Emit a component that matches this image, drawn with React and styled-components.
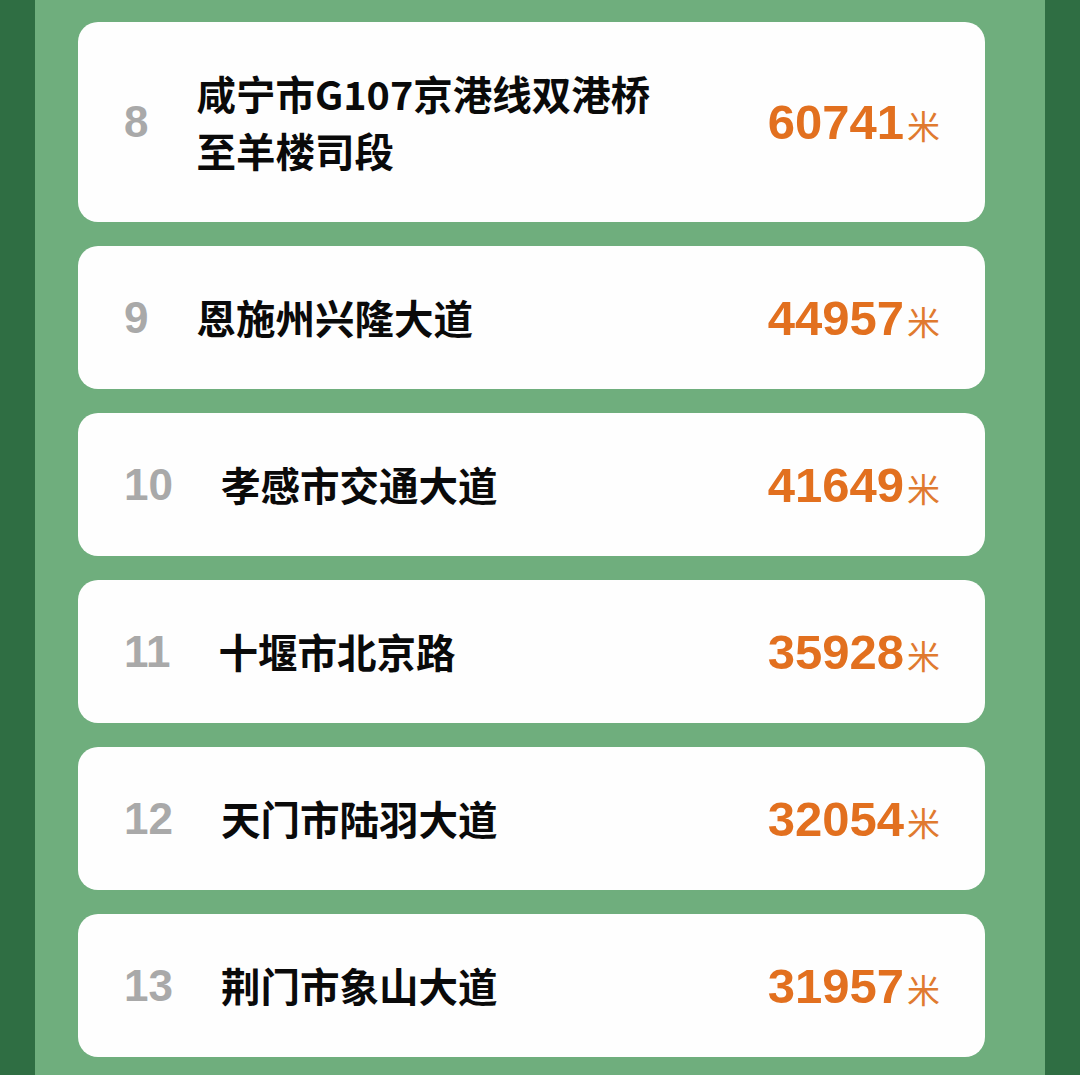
import React from "react";
import styled, { createGlobalStyle } from "styled-components";

const GlobalStyle = createGlobalStyle`
  html, body {
    margin: 0;
    padding: 0;
    background-color: #2f6e43;
  }
`;

const Page = styled.div`
  width: 1080px;
  height: 1075px;
  overflow: hidden;
  background-color: #2f6e43;
  padding: 0 35px;
  box-sizing: border-box;
`;

const Panel = styled.div`
  height: 100%;
  background-color: #6fae7d;
  padding: 22px 60px 0 43px;
  box-sizing: border-box;
  display: flex;
  flex-direction: column;
  gap: 24px;
`;

const Card = styled.div`
  background-color: #fefefe;
  border-radius: 20px;
  min-height: ${(p) => (p.tall ? "200px" : "143px")};
  box-sizing: border-box;
  display: flex;
  align-items: center;
  padding: 0 45px 0 46px;
`;

const Rank = styled.span`
  font-family: "Liberation Sans", Arial, sans-serif;
  font-weight: 700;
  font-size: 44px;
  color: #a9a9a9;
  margin-right: 48px;
  flex-shrink: 0;
`;

const Name = styled.div`
  flex: 1;
  max-width: 480px;
  font-family: "Noto Sans CJK SC", sans-serif;
  font-weight: 700;
  font-size: 39.5px;
  line-height: 57px;
  color: #0a0a0a;
  margin-top: -2px;
`;

const Value = styled.div`
  margin-left: auto;
  display: flex;
  align-items: baseline;
  color: #e2701f;
`;

const Num = styled.span`
  font-family: "Liberation Sans", Arial, sans-serif;
  font-weight: 700;
  font-size: 49px;
`;

const Unit = styled.span`
  font-family: "Noto Sans CJK SC", sans-serif;
  font-weight: 400;
  font-size: 33px;
  margin-left: 3px;
  color: #e07a30;
`;

const rows = [
  { rank: 8, name: "咸宁市G107京港线双港桥至羊楼司段", value: "60741", tall: true },
  { rank: 9, name: "恩施州兴隆大道", value: "44957" },
  { rank: 10, name: "孝感市交通大道", value: "41649" },
  { rank: 11, name: "十堰市北京路", value: "35928" },
  { rank: 12, name: "天门市陆羽大道", value: "32054" },
  { rank: 13, name: "荆门市象山大道", value: "31957" },
];

const App = () => {
  return (
    <Page>
      <GlobalStyle />
      <Panel>
        {rows.map((row) => (
          <Card key={row.rank} tall={row.tall}>
            <Rank>{row.rank}</Rank>
            <Name>{row.name}</Name>
            <Value>
              <Num>{row.value}</Num>
              <Unit>米</Unit>
            </Value>
          </Card>
        ))}
      </Panel>
    </Page>
  );
};

export default App;
